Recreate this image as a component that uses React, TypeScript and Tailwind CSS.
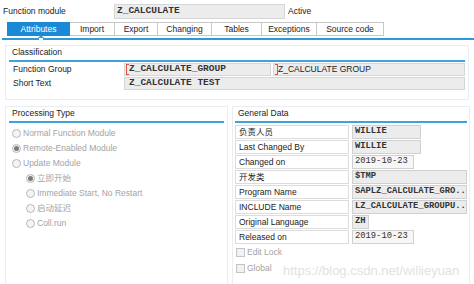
import React from 'react';

const sans = { fontFamily: '"Liberation Sans", "Noto Sans CJK SC", sans-serif' };
const mono = { fontFamily: '"Liberation Mono", "Noto Sans CJK SC", monospace' };

const tabs = [
  { label: 'Attributes', w: 'w-[63px]', active: true },
  { label: 'Import', w: 'w-[45px]' },
  { label: 'Export', w: 'w-[43px]' },
  { label: 'Changing', w: 'w-[54px]' },
  { label: 'Tables', w: 'w-[50px]' },
  { label: 'Exceptions', w: 'w-[55px]' },
  { label: 'Source code', w: 'w-[67px]' },
];

const Radio: React.FC<{ checked?: boolean }> = ({ checked }) => (
  <span className="w-[9px] h-[9px] rounded-full border border-[#b8b8b8] bg-[#f4f4f4] flex items-center justify-center shrink-0">
    {checked && <span className="w-[5px] h-[5px] rounded-full bg-[#7a7a7a]" />}
  </span>
);

const radios = [
  { label: 'Normal Function Module', indent: false },
  { label: 'Remote-Enabled Module', indent: false, checked: true },
  { label: 'Update Module', indent: false },
  { label: '立即开始', indent: true, checked: true },
  { label: 'Immediate Start, No Restart', indent: true },
  { label: '启动延迟', indent: true },
  { label: 'Coll.run', indent: true },
];

const general = [
  { label: '负责人员', value: 'WILLIE', w: 'w-[69px]' },
  { label: 'Last Changed By', value: 'WILLIE', w: 'w-[69px]' },
  { label: 'Changed on', value: '2019-10-23', w: 'w-[62px]', light: true },
  { label: '开发类', value: '$TMP', w: 'w-[115px]' },
  { label: 'Program Name', value: 'SAPLZ_CALCULATE_GRO..', w: 'w-[115px]' },
  { label: 'INCLUDE Name', value: 'LZ_CALCULATE_GROUPU..', w: 'w-[115px]' },
  { label: 'Original Language', value: 'ZH', w: 'w-[17px]' },
  { label: 'Released on', value: '2019-10-23', w: 'w-[62px]', light: true },
];

const GroupHeader: React.FC<{ title: string }> = ({ title }) => (
  <div className="h-[16px] flex items-end pl-[3px] pb-[1px] border-b-2 border-[#3ea3dc] text-[8.5px] text-[#222]">
    {title}
  </div>
);

export default function App() {
  return (
    <div className="w-[474px] h-[284px] bg-white overflow-hidden relative text-[#222]" style={sans}>
      {/* header row */}
      <div className="h-[20px] flex items-center pt-[2px]">
        <div className="w-[114px] pl-[3px] text-[8.5px]">Function module</div>
        <div className="w-[171px] h-[15px] bg-[#ececec] border border-[#d6d6d6] flex items-center pl-[2px] text-[9.5px] font-bold text-[#333]" style={mono}>
          Z_CALCULATE
        </div>
        <div className="ml-[3px] text-[8.5px]">Active</div>
      </div>

      {/* tabs */}
      <div className="relative mt-[2px] flex pl-[7px] h-[14px]">
        {tabs.map((t) => (
          <div
            key={t.label}
            className={`${t.w} h-[14px] flex items-center justify-center text-[8.5px] ${
              t.active ? 'bg-[#1b8ad6] text-white border border-[#1b8ad6]' : 'bg-white border border-[#c8c8c8] border-l-0 text-[#222]'
            }`}
          >
            {t.label}
          </div>
        ))}
      </div>
      <div className="relative mt-[2px] h-[2px] bg-[#2f98d8] ml-[2px]">
        <span className="absolute left-[35px] -top-[3px] w-0 h-0 border-l-[4px] border-r-[4px] border-b-[4px] border-l-transparent border-r-transparent border-b-[#2f98d8]" />
        <span className="absolute left-[37px] top-0 w-[4px] h-[2px] bg-white" />
      </div>

      {/* classification */}
      <div className="mt-[5px] mx-[5px] border border-[#e8eef2] px-[3px] pb-[9px]">
        <GroupHeader title="Classification" />
        <div className="flex flex-col gap-[1px] mt-[1px]">
          <div className="flex h-[13px] items-center">
            <div className="w-[115px] pl-[4px] text-[8.5px]">Function Group</div>
            <div className="relative w-[147px] h-[13px] bg-[#ececec] border border-[#d6d6d6] flex items-center pl-[4px] text-[9.5px] font-bold text-[#333]" style={mono}>
              <span className="absolute left-[1px] top-0 w-[3px] h-[11px] border-l border-t border-b border-[#e05050]" />
              Z_CALCULATE_GROUP
            </div>
            <div className="relative ml-[2px] flex-1 h-[13px] bg-[#ececec] border border-[#d6d6d6] flex items-center pl-[4px] text-[8.5px]">
              <span className="absolute left-[1px] top-0 w-[3px] h-[11px] border-r border-t border-b border-[#e05050]" />
              Z_CALCULATE GROUP
            </div>
          </div>
          <div className="flex h-[13px] items-center">
            <div className="w-[115px] pl-[4px] text-[8.5px]">Short Text</div>
            <div className="flex-1 h-[13px] bg-[#ececec] border border-[#d6d6d6] flex items-center pl-[4px] text-[9.5px] font-bold text-[#333]" style={mono}>
              Z_CALCULATE TEST
            </div>
          </div>
        </div>
      </div>

      {/* bottom groups */}
      <div className="mt-[6px] flex gap-[4px] pl-[5px] pr-[4px] h-[200px]">
        <div className="w-[223px] border border-[#e8eef2] px-[3px]">
          <GroupHeader title="Processing Type" />
          <div className="flex flex-col mt-[3px]">
            {radios.map((r) => (
              <div key={r.label} className={`h-[15px] flex items-center gap-[2px] text-[8.5px] text-[#a3a3a3] ${r.indent ? 'pl-[17px]' : 'pl-[3px]'}`}>
                <Radio checked={r.checked} />
                <span>{r.label}</span>
              </div>
            ))}
          </div>
        </div>
        <div className="flex-1 border border-[#e8eef2] px-[2px]">
          <GroupHeader title="General Data" />
          <div className="flex flex-col gap-[1px] mt-[2px]">
            {general.map((g) => (
              <div key={g.label} className="flex h-[14px] items-center">
                <div className="w-[114px] h-[14px] border border-[#dcdcdc] flex items-center pl-[3px] text-[8.5px]">{g.label}</div>
                <div
                  className={`${g.w} ml-[3px] h-[14px] border border-[#d0d0d0] flex items-center pl-[2px] text-[8.8px] whitespace-nowrap overflow-hidden text-[#333] ${
                    g.light ? 'bg-[#f6f6f6] font-normal' : 'bg-[#ececec] font-bold'
                  }`}
                  style={mono}
                >
                  {g.value}
                </div>
              </div>
            ))}
            {['Edit Lock', 'Global'].map((c) => (
              <div key={c} className="h-[15px] flex items-center gap-[2px] pl-[1px] text-[8.5px] text-[#a3a3a3]">
                <span className="w-[9px] h-[9px] border border-[#c4c4c4] bg-[#f2f2f2]" />
                <span>{c}</span>
              </div>
            ))}
          </div>
        </div>
      </div>

      {/* watermark */}
      <div className="absolute left-[283px] top-[261px] text-[13px] text-[#e2e2e2] whitespace-nowrap" style={{ fontFamily: '"Liberation Sans", sans-serif' }}>
        https://blog.csdn.net/willieyuan
      </div>
    </div>
  );
}
